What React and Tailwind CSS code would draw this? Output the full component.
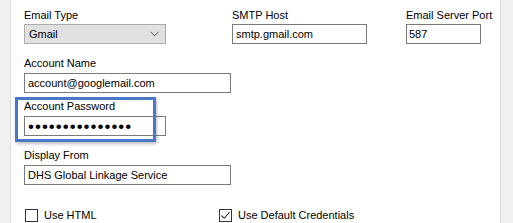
import React from "react";

function Field({ label, value, width, className = "" }) {
  return (
    <div className={className}>
      <div className="h-4 leading-4">{label}</div>
      <div
        className={`mt-[2px] h-5 border border-[#7a7a7a] bg-white pl-[3px] leading-[18px] ${width}`}
      >
        {value}
      </div>
    </div>
  );
}

function Checkbox({ label, checked }) {
  return (
    <div className="flex items-center h-4">
      <div className="ml-[1px] w-[13px] h-[13px] border border-[#333] bg-white flex items-center justify-center">
        {checked && (
          <svg width="11" height="11" viewBox="0 0 11 11">
            <path d="M1.5 5.5 L4.2 8.3 L9.5 2.2" fill="none" stroke="#333" strokeWidth="1.1" />
          </svg>
        )}
      </div>
      <span className="ml-[6px]">{label}</span>
    </div>
  );
}

export default function App() {
  return (
    <div
      className="flex w-[513px] h-[223px] overflow-hidden bg-white text-[11px] text-black"
      style={{ fontFamily: '"Liberation Sans", Arial, sans-serif' }}
    >
      <div className="w-[11px] shrink-0 bg-[#f0f0f0] border-r border-[#dcdcdc]" />

      <div className="relative flex-1 pl-[13px] pt-[7px]">
        {/* row 1 */}
        <div className="flex">
          <div className="w-[208px]">
            <div className="h-4 leading-4">Email Type</div>
            <div className="mt-[1px] w-[142px] h-5 border border-[#adadad] bg-[#e1e1e1] flex items-center justify-between pl-[4px] pr-[6px]">
              <span>Gmail</span>
              <svg width="9" height="6" viewBox="0 0 9 6">
                <path d="M0.5 0.8 L4.5 4.8 L8.5 0.8" fill="none" stroke="#555" strokeWidth="1" />
              </svg>
            </div>
          </div>
          <div className="w-[174px]">
            <div className="h-4 leading-4">SMTP Host</div>
            <div className="mt-[1px] w-[135px] h-5 border border-[#7a7a7a] pl-[3px] leading-[18px]">
              smtp.gmail.com
            </div>
          </div>
          <div>
            <div className="h-4 leading-4">Email Server Port</div>
            <div className="mt-[1px] w-[75px] h-5 border border-[#7a7a7a] pl-[2px] leading-[18px]">
              587
            </div>
          </div>
        </div>

        <Field className="mt-[11px]" label="Account Name" value="account@googlemail.com" width="w-[207px]" />

        <div className="mt-[5px]">
          <div className="h-4 leading-4">Account Password</div>
          <div className="mt-[2px] w-[142px] h-5 border border-[#7a7a7a] pl-[3px] flex items-center">
            <span className="text-[17px] leading-none tracking-[1px]">•••••••••••••••</span>
          </div>
        </div>

        <Field className="mt-[11px]" label="Display From" value="DHS Global Linkage Service" width="w-[207px]" />

        <div className="mt-[22px] flex">
          <div className="w-[194px]">
            <Checkbox label="Use HTML" />
          </div>
          <Checkbox label="Use Default Credentials" checked />
        </div>

        {/* highlight around password */}
        <div className="absolute left-[4px] top-[97px] w-[141px] h-[45px] border-[3px] border-[#4a78c8] shadow-[1px_2px_3px_rgba(0,0,0,0.25)]" />
      </div>

      <div className="w-[13px] shrink-0 bg-[#f0f0f0] border-l border-[#dcdcdc]" />
    </div>
  );
}
